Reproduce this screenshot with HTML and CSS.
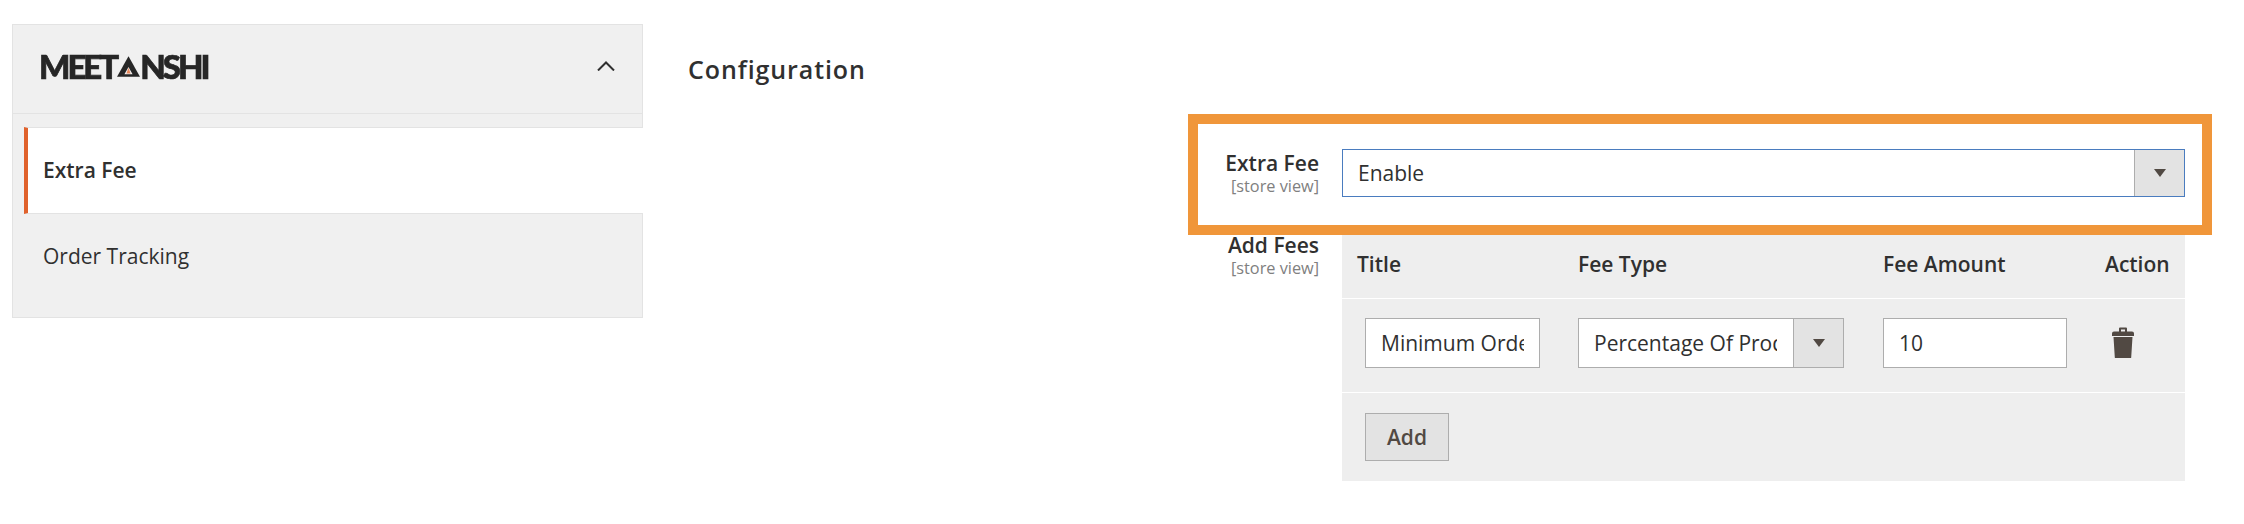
FILE: index.html
```html
<!DOCTYPE html>
<html lang="en">
<head>
<meta charset="UTF-8" />
<title>Configuration</title>
<link rel="stylesheet" href="styles.css">
</head>
<body>
<div class="page">
  <aside class="sidebar">
    <div class="side-head">
      <div class="logo">MEET<svg class="logo-a" viewBox="0 0 28 25"><path d="M14 0 28 25H0Z" fill="#262626"/><path d="M14 13 19 22H9Z" fill="#f0f0f0"/><path d="M14 14 16.500 21H11.500Z" fill="#e8875a"/></svg>NSHI</div>
      <svg class="chevron" viewBox="0 0 18 10"><path d="M1 9.500 9 1.500l8 8" fill="none" stroke="#303030" stroke-width="2"/></svg>
    </div>
    <nav class="side-nav">
      <a class="side-link active" href="#">Extra Fee</a>
      <a class="side-link" href="#">Order Tracking</a>
    </nav>
  </aside>

  <main class="content">
    <h1>Configuration</h1>

    <div class="field first">
      <div class="highlight"></div>
      <label class="field-label">Extra Fee<span>[store view]</span></label>
      <div class="select-wrap focus">
        <select class="select"><option>Enable</option></select>
        <span class="select-arrow"></span>
      </div>
    </div>

    <div class="field second">
      <label class="field-label">Add Fees<span>[store view]</span></label>
      <div class="fees">
        <div class="fees-row fees-head">
          <div>Title</div>
          <div>Fee Type</div>
          <div>Fee Amount</div>
          <div>Action</div>
        </div>
        <div class="fees-row fees-item">
          <div><input class="input title-input" type="text" value="Minimum Order Fee" /></div>
          <div class="select-wrap type-select">
            <select class="select"><option>Percentage Of Product Price</option></select>
            <span class="select-arrow"></span>
          </div>
          <div><input class="input amount-input" type="text" value="10" /></div>
          <div>
            <svg class="trash" viewBox="0 0 22 31"><path d="M7 5V1.500A1 1 0 0 1 8 .5h6a1 1 0 0 1 1 1V5h-2V2.500H9V5Z" fill="#514943"/><path d="M2 4.500h18a2 2 0 0 1 2 2V9H0V6.500a2 2 0 0 1 2-2Z" fill="#514943"/><path d="M1.500 10h19l-1.300 20.500a.5.5 0 0 1-.5.500H3.300a.5.5 0 0 1-.5-.5Z" fill="#514943"/></svg>
          </div>
        </div>
        <div class="fees-foot">
          <button class="btn">Add</button>
        </div>
      </div>
    </div>
  </main>
</div>
</body>
</html>
```

FILE: styles.css
```css
* {
  margin: 0;
  padding: 0;
  box-sizing: border-box;
  font-family: 'Open Sans', sans-serif;
}
body {
  background: #fff;
  color: #303030;
  font-size: 21px;
}
.page {
  display: flex;
  padding: 24px 0 0 12px;
}

/* sidebar */
.sidebar {
  width: 631px;
  height: 294px;
  background: #f0f0f0;
  border: 1px solid #e3e3e3;
  flex-shrink: 0;
}
.side-head {
  height: 89px;
  padding: 0 27px 6px 26px;
  display: flex;
  justify-content: space-between;
  align-items: center;
  border-bottom: 1px solid #e3e3e3;
}
.logo {
  display: flex;
  align-items: center;
  font-family: 'Lato', sans-serif;
  font-weight: 900;
  font-size: 33px;
  line-height: 34px;
  letter-spacing: -3px;
  color: #262626;
  -webkit-text-stroke: 0.7px #262626;
  filter: blur(0.4px);
}
.logo-a {
  width: 23px;
  height: 25px;
  margin: 0 0 0 1px;
}
.chevron {
  width: 18px;
  height: 10px;
}
.side-nav {
  padding: 13px 0 0 11px;
  margin-right: -1px;
}
.side-link {
  display: block;
  height: 87px;
  line-height: 84px;
  padding-left: 19px;
  color: #303030;
  text-decoration: none;
}
.side-link.active {
  background: #fff;
  font-weight: 600;
  border-top: 1px solid #e3e3e3;
  border-bottom: 1px solid #e3e3e3;
  border-left: 4px solid #e0622c;
  padding-left: 15px;
}

/* main */
.content {
  padding-left: 45px;
}
h1 {
  font-size: 25px;
  font-weight: 600;
  letter-spacing: 0.9px;
  line-height: 32px;
  margin-top: 29px;
  margin-bottom: 64px;
}
.field {
  display: grid;
  grid-template-columns: 631px 843px;
  column-gap: 23px;
  position: relative;
}
.field.second {
  margin-top: 38px;
}
.highlight {
  position: absolute;
  top: -35px;
  bottom: -38px;
  left: 500px;
  right: -27px;
  border: 10px solid #f0963a;
  z-index: 2;
}
.field-label {
  text-align: right;
  font-weight: 600;
  line-height: 28px;
}
.field.second .field-label {
  margin-top: -4px;
}
.field-label span {
  display: block;
  font-size: 16.300px;
  font-weight: 400;
  line-height: 18px;
  color: #808080;
}

/* form controls */
.select-wrap {
  position: relative;
  height: 48px;
}
.select {
  appearance: none;
  width: 100%;
  height: 100%;
  background: #fff;
  border: 1px solid #adadad;
  padding: 0 66px 0 15px;
  font-size: 21px;
  color: #303030;
  border-radius: 0;
  outline: none;
}
.select-arrow {
  position: absolute;
  top: 1px;
  right: 1px;
  bottom: 1px;
  width: 50px;
  background: #e3e3e3;
  border-left: 1px solid #adadad;
}
.select-arrow::after {
  content: '';
  position: absolute;
  left: 19px;
  top: 50%;
  margin-top: -4px;
  border-left: 6px solid transparent;
  border-right: 6px solid transparent;
  border-top: 8px solid #514943;
}
.select-wrap.focus .select {
  border-color: #4a7cbf;
}
.input {
  display: block;
  height: 50px;
  background: #fff;
  border: 1px solid #adadad;
  padding: 0 15px;
  font-size: 21px;
  color: #303030;
  border-radius: 0;
  outline: none;
}

/* fee table */
.fees {
  background: #eee;
  height: 246px;
}
.fees-row {
  display: grid;
  grid-template-columns: 236px 305px 222px 80px;
  border-bottom: 1px solid #fff;
}
.fees-head {
  height: 64px;
  padding-top: 16px;
  font-weight: 600;
  line-height: 26px;
}
.fees-head > div:first-child {
  padding-left: 15px;
}
.fees-item {
  height: 94px;
  padding-top: 19px;
}
.fees-item > div:first-child {
  padding-left: 23px;
}
.title-input {
  width: 175px;
}
.type-select {
  width: 266px;
  height: 50px;
}
.amount-input {
  width: 184px;
}
.trash {
  display: block;
  width: 22px;
  height: 31px;
  margin: 9px 0 0 7px;
}
.fees-foot {
  padding: 20px 0 0 23px;
}
.btn {
  width: 84px;
  height: 48px;
  background: #e3e3e3;
  border: 1px solid #adadad;
  color: #514943;
  font-size: 21px;
  font-weight: 600;
}
```
